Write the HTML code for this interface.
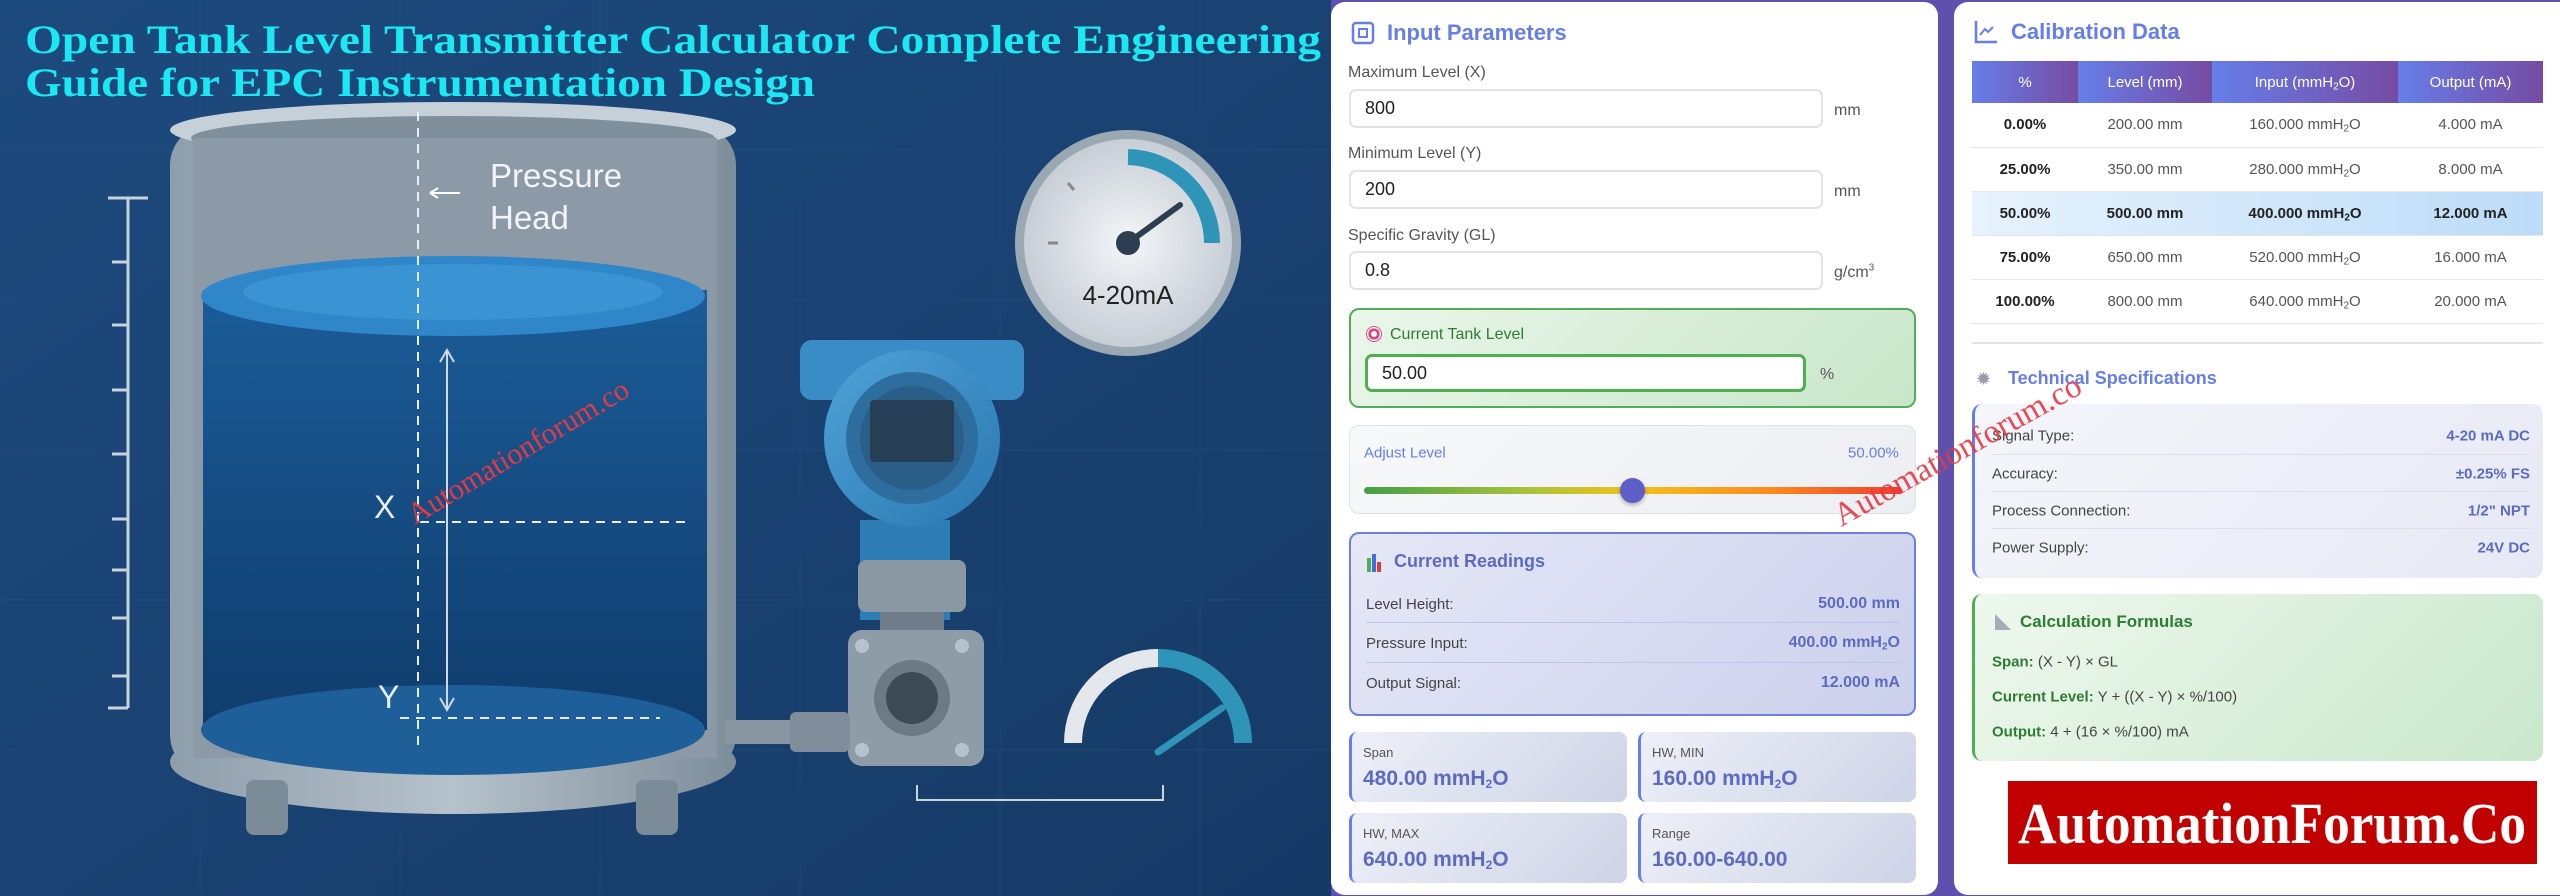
<!DOCTYPE html>
<html><head><meta charset="utf-8"><style>
*{margin:0;padding:0;box-sizing:border-box}
sub{line-height:0;vertical-align:-0.25em}
sup{line-height:0}
body{width:2560px;height:896px;overflow:hidden;background:#5f50ad;font-family:"Liberation Sans",sans-serif;position:relative}
.a{position:absolute}
.panel{position:absolute;background:#fff;border-radius:14px}
.lbl{position:absolute;font-size:16px;color:#555;transform:translateY(-50%)}
.inp{position:absolute;border:2px solid #e2e2e2;border-radius:7px;background:#fff;font-size:18px;color:#222;padding-left:14px;display:flex;align-items:center}
.unit{position:absolute;font-size:16px;color:#555;transform:translateY(-50%)}
.h{position:absolute;font-size:22px;font-weight:bold;color:#667eea;transform:translateY(-50%)}
.row{position:absolute;left:15px;right:14px;display:flex;justify-content:space-between;align-items:center;font-size:15px;color:#444}
.row b{color:#5c6bc0;font-size:16px}
.card{position:absolute;width:278px;height:70px;border-left:3px solid #667eea;border-radius:8px;background:linear-gradient(135deg,#eef0f8,#cdd4e6)}
.card .l{position:absolute;left:11px;top:13px;font-size:13px;color:#555}
.card .v{position:absolute;left:11px;top:35px;font-size:21px;font-weight:bold;color:#5c6bc0}
table{border-collapse:collapse}
.tb td{height:44px;text-align:center;font-size:15px;color:#555;border-bottom:1px solid #e6e6e6}
.tb td:first-child{font-weight:bold;color:#222}
.tb th{background:linear-gradient(90deg,#667eea,#764ba2);color:#fff;font-weight:normal;font-size:15px}
.sp{position:absolute;left:17px;right:13px;display:flex;justify-content:space-between;font-size:15px;color:#444;transform:translateY(-50%)}
.sp b{color:#5c6bc0}
.fm{position:absolute;left:17px;font-size:15px;color:#444;transform:translateY(-50%)}
.fm b{color:#2e7d32}
</style></head><body>

<svg class="a" style="left:0;top:0" width="1331" height="896" viewBox="0 0 1331 896">
<defs>
<linearGradient id="bg" x1="0" y1="0" x2="1" y2="1"><stop offset="0" stop-color="#1d4a7e"/><stop offset="1" stop-color="#163a66"/></linearGradient>
<linearGradient id="wat" x1="0" y1="0" x2="0" y2="1"><stop offset="0" stop-color="#1b5c98"/><stop offset="1" stop-color="#0f3c6c"/></linearGradient>
<linearGradient id="wall" x1="0" y1="0" x2="1" y2="0"><stop offset="0" stop-color="#8e9eab"/><stop offset=".5" stop-color="#b6c2cb"/><stop offset="1" stop-color="#7d8d9a"/></linearGradient>
<linearGradient id="tx" x1="0" y1="0" x2="1" y2="1"><stop offset="0" stop-color="#4fa3d8"/><stop offset="1" stop-color="#2a78b0"/></linearGradient>
<radialGradient id="gg"><stop offset="0" stop-color="#f4f6f8"/><stop offset="1" stop-color="#c7ced6"/></radialGradient>
</defs>
<rect width="1331" height="896" fill="url(#bg)"/>
<g stroke="#24507f" stroke-width="1" opacity=".6">
<path d="M0 150H1331M0 300H1331M0 450H1331M0 600H1331M0 750H1331M200 0V896M400 0V896M600 0V896M800 0V896M1000 0V896M1200 0V896"/>
</g>
<g stroke="#c9d3dc" stroke-width="3" fill="none"><path d="M128 198V708M108 198H148M112 262H128M112 325H128M112 390H128M112 454H128M112 519H128M112 570H128M112 618H128M112 676H128M108 708H128"/></g>
<rect x="170" y="125" width="566" height="650" rx="40" fill="url(#wall)"/>
<ellipse cx="453" cy="762" rx="283" ry="52" fill="url(#wall)"/>
<ellipse cx="453" cy="130" rx="283" ry="28" fill="#c5d0d8"/>
<ellipse cx="453" cy="138" rx="262" ry="22" fill="#7f8f9c"/>
<rect x="193" y="138" width="524" height="620" fill="#8b9aa6"/>
<rect x="203" y="290" width="504" height="440" fill="url(#wat)"/>
<ellipse cx="453" cy="730" rx="252" ry="45" fill="#1e5f99"/>
<ellipse cx="453" cy="296" rx="252" ry="40" fill="#2f86c8"/>
<ellipse cx="453" cy="292" rx="210" ry="28" fill="#3f98d6" opacity=".7"/>
<rect x="246" y="780" width="42" height="55" rx="8" fill="#7b8b98"/>
<rect x="636" y="780" width="42" height="55" rx="8" fill="#7b8b98"/>
<g stroke="#e8eef4" stroke-width="2" stroke-dasharray="9 7" fill="none">
<path d="M418 112V745"/><path d="M420 522H690"/><path d="M400 718H660"/>
</g>
<path d="M447 352V708M440 362L447 350L454 362M440 698L447 710L454 698" stroke="#cfd9e2" stroke-width="2" fill="none"/>
<path d="M430 193H460M430 193L438 188M430 193L438 198" stroke="#fff" stroke-width="2" fill="none"/>
<text x="490" y="187" font-size="33" fill="#f2f4f6" font-family="Liberation Sans">Pressure</text>
<text x="490" y="229" font-size="33" fill="#f2f4f6" font-family="Liberation Sans">Head</text>
<text x="374" y="518" font-size="32" fill="#e8eef4" font-family="Liberation Sans">X</text>
<text x="378" y="708" font-size="32" fill="#e8eef4" font-family="Liberation Sans">Y</text>
<rect x="725" y="720" width="80" height="24" fill="#8896a2"/>
<circle cx="1128" cy="243" r="113" fill="#9aa8b4"/>
<circle cx="1128" cy="243" r="104" fill="url(#gg)"/>
<path d="M1128 157A86 86 0 0 1 1212 243" stroke="#2e95b8" stroke-width="16" fill="none"/>
<path d="M1128 243L1180 205" stroke="#2c3e50" stroke-width="6" stroke-linecap="round"/>
<circle cx="1128" cy="243" r="12" fill="#2c3e50"/>
<path d="M1068 183L1074 190M1048 243H1058" stroke="#888" stroke-width="3"/>
<text x="1128" y="304" font-size="26" fill="#222" text-anchor="middle" font-family="Liberation Sans">4-20mA</text>
<rect x="860" y="520" width="90" height="100" fill="#2f7db5"/>
<rect x="800" y="340" width="224" height="60" rx="12" fill="#3a8cc6"/>
<circle cx="912" cy="438" r="88" fill="url(#tx)"/>
<circle cx="912" cy="438" r="66" fill="#2d6e9f"/>
<circle cx="912" cy="438" r="52" fill="#2a5e88"/>
<rect x="870" y="400" width="84" height="62" rx="4" fill="#263f57"/>
<rect x="858" y="560" width="108" height="52" rx="8" fill="#8a98a4"/>
<rect x="880" y="612" width="64" height="20" fill="#6e7d89"/>
<rect x="848" y="630" width="136" height="136" rx="14" fill="#8e9ca8"/>
<circle cx="912" cy="698" r="38" fill="#6c7a86"/>
<circle cx="912" cy="698" r="26" fill="#3c4a56"/>
<g fill="#b7c3cc"><circle cx="862" cy="646" r="7"/><circle cx="962" cy="646" r="7"/><circle cx="862" cy="750" r="7"/><circle cx="962" cy="750" r="7"/></g>
<rect x="790" y="712" width="60" height="40" rx="6" fill="#7f8e9a"/>
<path d="M1073 743A85 85 0 0 1 1158 658" stroke="#e4e8ec" stroke-width="18" fill="none"/>
<path d="M1158 658A85 85 0 0 1 1243 743" stroke="#2e95b8" stroke-width="18" fill="none"/>
<path d="M1158 752L1222 708" stroke="#2e95b8" stroke-width="7" stroke-linecap="round"/>
<path d="M917 785V800H1163V785" stroke="#c9d3dc" stroke-width="2" fill="none"/>
<text x="25" y="53" font-size="40" font-weight="bold" fill="#1ae8f2" font-family="Liberation Serif" textLength="1296" lengthAdjust="spacingAndGlyphs">Open Tank Level Transmitter Calculator Complete Engineering</text>
<text x="25" y="96" font-size="40" font-weight="bold" fill="#1ae8f2" font-family="Liberation Serif" textLength="790" lengthAdjust="spacingAndGlyphs">Guide for EPC Instrumentation Design</text>
<text x="0" y="0" font-size="30" fill="#e53945" font-family="Liberation Serif" transform="translate(415 525) rotate(-31)">Automationforum.co</text>
</svg>

<div class="panel" style="left:1331px;top:2px;width:607px;height:893px"></div>
<svg class="a" style="left:1351px;top:21px" width="24" height="24"><rect x="2" y="2" width="20" height="20" rx="3" stroke="#667eea" stroke-width="2.5" fill="none"/><rect x="8" y="8" width="8" height="8" stroke="#667eea" stroke-width="2" fill="none"/></svg>
<div class="h" style="left:1387px;top:33px">Input Parameters</div>
<div class="lbl" style="left:1348px;top:73px">Maximum Level (X)</div>
<div class="inp" style="left:1349px;top:89px;width:474px;height:39px">800</div>
<div class="unit" style="left:1834px;top:111px">mm</div>
<div class="lbl" style="left:1348px;top:154px">Minimum Level (Y)</div>
<div class="inp" style="left:1349px;top:170px;width:474px;height:39px">200</div>
<div class="unit" style="left:1834px;top:192px">mm</div>
<div class="lbl" style="left:1348px;top:236px">Specific Gravity (GL)</div>
<div class="inp" style="left:1349px;top:251px;width:474px;height:39px">0.8</div>
<div class="unit" style="left:1834px;top:273px">g/cm<sup style="font-size:10px">3</sup></div>

<div class="a" style="left:1349px;top:308px;width:567px;height:100px;border:2px solid #52ad57;border-radius:10px;background:linear-gradient(135deg,#eaf6ea,#c8e6c9)"></div>
<div class="a" style="left:1366px;top:326px;width:16px;height:16px;border-radius:50%;background:radial-gradient(circle,#fff 0 25%,#e0457b 26% 50%,#fff 51% 62%,#e0457b 63%)"></div>
<div class="lbl" style="left:1390px;top:335px;color:#2e7d32">Current Tank Level</div>
<div class="inp" style="left:1365px;top:354px;width:441px;height:38px;border:3px solid #4caf50">50.00</div>
<div class="unit" style="left:1820px;top:375px">%</div>

<div class="a" style="left:1349px;top:425px;width:567px;height:89px;border:1px solid #e0e2e6;border-radius:10px;background:linear-gradient(135deg,#f7f8fa,#eceef2)"></div>
<div class="lbl" style="left:1364px;top:453px;color:#667eea;font-size:15px">Adjust Level</div>
<div class="lbl" style="left:1848px;top:453px;color:#667eea;font-size:15px">50.00%</div>
<div class="a" style="left:1364px;top:487px;width:538px;height:7px;border-radius:4px;background:linear-gradient(90deg,#43a047,#a8c23a 30%,#f2c21b 50%,#fb8c1e 75%,#f03a2e)"></div>
<div class="a" style="left:1620px;top:478px;width:25px;height:25px;border-radius:50%;background:#5d5fc9;box-shadow:0 2px 4px rgba(0,0,0,.3)"></div>

<div class="a" style="left:1349px;top:532px;width:567px;height:184px;border:2px solid #6b7fe0;border-radius:10px;background:linear-gradient(135deg,#e6e8f7,#cbd0ec)">
<svg class="a" style="left:15px;top:20px" width="16" height="18"><rect x="1" y="4" width="4" height="14" fill="#4caf50"/><rect x="6" y="0" width="4" height="18" fill="#3f6fd8"/><rect x="11" y="8" width="4" height="10" fill="#e53935"/></svg>
<div class="a" style="left:43px;top:17px;font-size:18px;font-weight:bold;color:#5c6bc0">Current Readings</div>
<div class="row" style="top:58px;height:24px"><span>Level Height:</span><b>500.00 mm</b></div>
<div class="a" style="left:15px;right:14px;top:88px;height:1px;background:#bfc5e6"></div>
<div class="row" style="top:97px;height:24px"><span>Pressure Input:</span><b>400.00 mmH<sub style="font-size:10px">2</sub>O</b></div>
<div class="a" style="left:15px;right:14px;top:128px;height:1px;background:#bfc5e6"></div>
<div class="row" style="top:137px;height:24px"><span>Output Signal:</span><b>12.000 mA</b></div>
</div>

<div class="card" style="left:1349px;top:732px"><div class="l">Span</div><div class="v">480.00 mmH<sub style="font-size:12px">2</sub>O</div></div>
<div class="card" style="left:1638px;top:732px"><div class="l">HW, MIN</div><div class="v">160.00 mmH<sub style="font-size:12px">2</sub>O</div></div>
<div class="card" style="left:1349px;top:813px"><div class="l">HW, MAX</div><div class="v">640.00 mmH<sub style="font-size:12px">2</sub>O</div></div>
<div class="card" style="left:1638px;top:813px"><div class="l">Range</div><div class="v">160.00-640.00</div></div>

<div class="panel" style="left:1954px;top:2px;width:620px;height:893px"></div>
<svg class="a" style="left:1974px;top:20px" width="24" height="24"><path d="M2 1V22H23" stroke="#667eea" stroke-width="2.5" fill="none"/><path d="M6 15L11 9L14 12L19 7" stroke="#667eea" stroke-width="2" fill="none"/></svg>
<div class="h" style="left:2011px;top:32px">Calibration Data</div>
<table class="a tb" style="left:1972px;top:61px;width:571px">
<tr style="height:42px"><th style="width:106px">%</th><th style="width:134px">Level (mm)</th><th style="width:186px">Input (mmH<sub style="font-size:10px">2</sub>O)</th><th>Output (mA)</th></tr>
<tr><td>0.00%</td><td>200.00 mm</td><td>160.000 mmH<sub style="font-size:10px">2</sub>O</td><td>4.000 mA</td></tr>
<tr><td>25.00%</td><td>350.00 mm</td><td>280.000 mmH<sub style="font-size:10px">2</sub>O</td><td>8.000 mA</td></tr>
<tr style="background:linear-gradient(90deg,#e6f2fd,#bcdcf8)"><td>50.00%</td><td style="font-weight:bold;color:#222">500.00 mm</td><td style="font-weight:bold;color:#222">400.000 mmH<sub style="font-size:10px">2</sub>O</td><td style="font-weight:bold;color:#222">12.000 mA</td></tr>
<tr><td>75.00%</td><td>650.00 mm</td><td>520.000 mmH<sub style="font-size:10px">2</sub>O</td><td>16.000 mA</td></tr>
<tr><td>100.00%</td><td>800.00 mm</td><td>640.000 mmH<sub style="font-size:10px">2</sub>O</td><td>20.000 mA</td></tr>
</table>
<div class="a" style="left:1972px;top:342px;width:571px;height:2px;background:#e4e4e4"></div>
<div class="a" style="left:1976px;top:370px;font-size:18px;color:#9a9aaa;line-height:18px">✹</div>
<div class="a" style="left:2008px;top:368px;font-size:18px;font-weight:bold;color:#667eea">Technical Specifications</div>
<div class="a" style="left:1972px;top:404px;width:571px;height:174px;border-left:3px solid #667eea;border-radius:10px;background:linear-gradient(135deg,#f5f6fa,#e6e8f5)">
<div class="sp" style="top:32px"><span>Signal Type:</span><b>4-20 mA DC</b></div>
<div class="a" style="left:17px;right:13px;top:50px;height:1px;background:#dcdfe8"></div>
<div class="sp" style="top:70px"><span>Accuracy:</span><b>±0.25% FS</b></div>
<div class="a" style="left:17px;right:13px;top:87px;height:1px;background:#dcdfe8"></div>
<div class="sp" style="top:107px"><span>Process Connection:</span><b>1/2" NPT</b></div>
<div class="a" style="left:17px;right:13px;top:124px;height:1px;background:#dcdfe8"></div>
<div class="sp" style="top:144px"><span>Power Supply:</span><b>24V DC</b></div>
</div>
<div class="a" style="left:1972px;top:594px;width:571px;height:167px;border-left:3px solid #4caf50;border-radius:10px;background:linear-gradient(135deg,#eef8ee,#c9e7cb)">
<svg class="a" style="left:19px;top:19px" width="18" height="18"><path d="M1 1V17H17Z" fill="#a9aab5"/></svg>
<div class="a" style="left:45px;top:18px;font-size:17px;font-weight:bold;color:#2e7d32">Calculation Formulas</div>
<div class="fm" style="top:68px"><b>Span:</b> (X - Y) × GL</div>
<div class="fm" style="top:103px"><b>Current Level:</b> Y + ((X - Y) × %/100)</div>
<div class="fm" style="top:138px"><b>Output:</b> 4 + (16 × %/100) mA</div>
</div>
<svg class="a" style="left:2008px;top:781px" width="529" height="83"><rect width="529" height="83" fill="#c10000"/><text x="264" y="62" text-anchor="middle" font-family="Liberation Serif" font-weight="bold" font-size="58" fill="#fff" textLength="508" lengthAdjust="spacingAndGlyphs">AutomationForum.Co</text></svg>

<div class="a" style="left:1845px;top:498px;font-family:'Liberation Serif',serif;font-size:33px;color:#e53945;transform:rotate(-29deg);transform-origin:0 100%;white-space:nowrap;opacity:.9;line-height:36px">Automationforum.co</div>
</body></html>
